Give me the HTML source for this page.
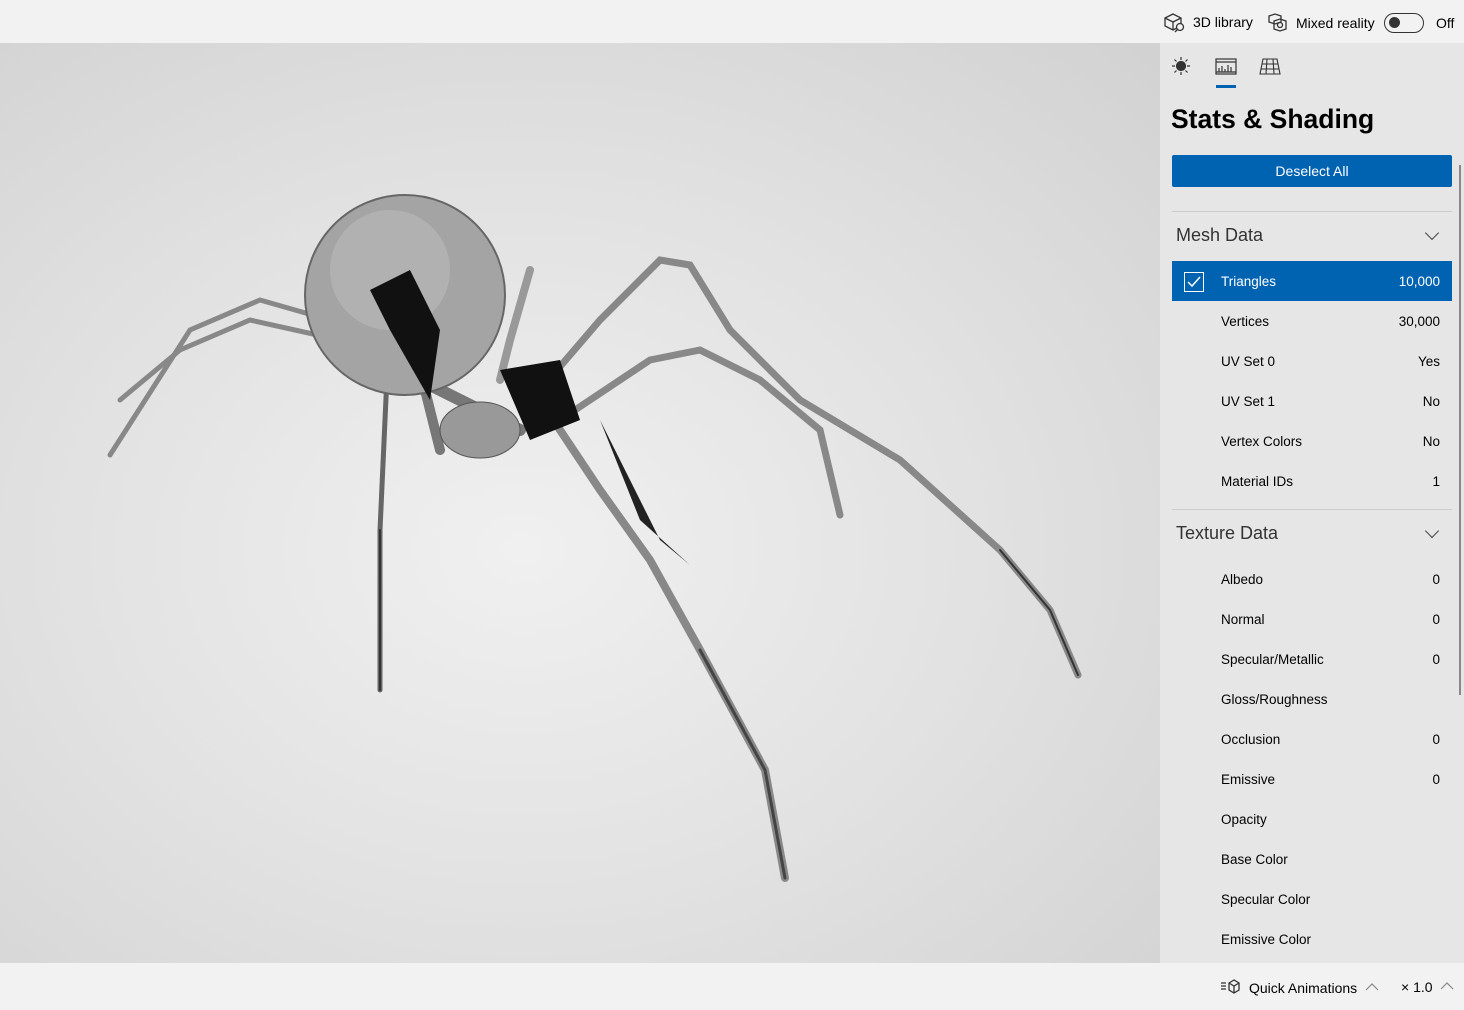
<!DOCTYPE html>
<html><head><meta charset="utf-8"><style>
*{margin:0;padding:0;box-sizing:border-box}
body{width:1464px;height:1010px;overflow:hidden;font-family:"Segoe UI","Liberation Sans",sans-serif;background:#f2f2f2;position:relative;color:#000}
#top{position:absolute;left:0;top:0;width:1464px;height:43px;background:#f2f2f2}
#view{position:absolute;left:0;top:43px;width:1160px;height:920px;background:radial-gradient(ellipse 900px 700px at 45% 55%,#f0f0f0 0%,#e2e2e2 50%,#d2d2d2 100%)}
#panel{position:absolute;left:1160px;top:43px;width:304px;height:920px;background:#e6e6e6}
#bot{position:absolute;left:0;top:963px;width:1464px;height:47px;background:#f2f2f2}
.t{position:absolute;font-size:14px;white-space:nowrap}
.row{position:absolute;left:1172px;width:280px;height:40px;font-size:13.5px}
.row .l{position:absolute;left:49px;top:13px}
.row .v{position:absolute;right:12px;top:13px}
.hd{position:absolute;left:1176px;font-size:18px;color:#333}
.sep{position:absolute;left:1172px;width:280px;height:1px;background:#ccc}
.chev{position:absolute;left:1427px;width:10px;height:10px;border-right:1.5px solid #444;border-bottom:1.5px solid #444;transform:rotate(45deg)}
</style></head><body>
<div id="top"></div>
<div id="view">
<svg width="1160" height="920" viewBox="0 43 1160 920" style="position:absolute;left:0;top:0">
<g fill="none" stroke="#333" stroke-linecap="round">
<path d="M390 310 L380 530 L380 690" stroke-width="5" stroke="#666"/>
<path d="M380 530 L380 690" stroke-width="2"/>
<path d="M410 330 L440 450" stroke-width="10" stroke="#777"/>
<path d="M540 400 L600 490 L650 560 L700 650 L765 770 L785 878" stroke-width="8" stroke="#888"/>
<path d="M700 650 L765 770 L785 878" stroke-width="3" stroke="#444"/>
<path d="M540 390 L600 320 L660 260 L690 265 L730 330 L800 400 L900 460 L1000 550 L1050 610 L1078 675" stroke-width="7" stroke="#888"/>
<path d="M1000 550 L1050 610 L1078 675" stroke-width="2"/>
<path d="M560 420 L650 360 L700 350 L760 380 L820 430 L840 515" stroke-width="7" stroke="#888"/>
<path d="M330 320 L260 300 L190 330 L110 455" stroke-width="5" stroke="#888"/>
<path d="M340 340 L250 320 L180 350 L120 400" stroke-width="5" stroke="#888"/>
<path d="M530 270 L510 340 L500 380" stroke-width="8" stroke="#999"/>
<path d="M420 380 L520 430" stroke-width="12" stroke="#777"/>
</g>
<ellipse cx="405" cy="295" rx="100" ry="100" fill="#a4a4a4" stroke="#666" stroke-width="2"/>
<ellipse cx="390" cy="270" rx="60" ry="60" fill="#bbb" opacity=".6"/>
<path d="M370 290 L410 270 L440 330 L430 400 L390 330Z" fill="#111"/>
<path d="M500 370 L560 360 L580 420 L530 440Z" fill="#111"/>
<path d="M600 420 L660 540 L690 565 L640 520Z" fill="#222"/>
<ellipse cx="480" cy="430" rx="40" ry="28" fill="#999" stroke="#555"/>
</svg>
</div>
<div id="panel"></div>
<svg style="position:absolute;left:1163px;top:12px" width="24" height="22" viewBox="0 0 24 22" fill="none" stroke="#333" stroke-width="1.3"><path d="M2 6 L10 2 L18 6 L18 14 L10 18 L2 14Z M2 6 L10 10 L18 6 M10 10 V18"/><circle cx="17" cy="15" r="3.5" fill="#f2f2f2"/><path d="M14.5 17.5 L12 20"/></svg>
<div class="t" style="left:1193px;top:14px">3D library</div>
<svg style="position:absolute;left:1267px;top:12px" width="22" height="22" viewBox="0 0 22 22" fill="none" stroke="#333" stroke-width="1.3"><path d="M2 4 L8 2 L14 4 L14 10 L8 12 L2 10Z"/><path d="M7 9 L13 7 L19 9 L19 17 L13 19 L7 17Z"/><circle cx="13" cy="13" r="2.5"/></svg>
<div class="t" style="left:1296px;top:15px">Mixed reality</div>
<div style="position:absolute;left:1384px;top:13px;width:40px;height:20px;border:1.5px solid #333;border-radius:10px"><div style="position:absolute;left:4px;top:3px;width:11px;height:11px;border-radius:50%;background:#333"></div></div>
<div class="t" style="left:1436px;top:15px">Off</div>
<svg style="position:absolute;left:1171px;top:56px" width="20" height="20" viewBox="0 0 20 20" stroke="#333" stroke-width="1.2"><circle cx="10" cy="10" r="4.5" fill="#333"/><path d="M10 1v3M10 16v3M1 10h3M16 10h3M3.5 3.5l2 2M14.5 14.5l2 2M3.5 16.5l2-2M14.5 5.5l2-2"/></svg>
<svg style="position:absolute;left:1215px;top:58px" width="22" height="17" viewBox="0 0 22 17" fill="none" stroke="#333" stroke-width="1.2"><rect x="1" y="1" width="20" height="15"/><path d="M1 4h20M4 14V10M7 14V8M10 14V11M13 14V7M16 14V9M1 14h20"/></svg>
<div style="position:absolute;left:1216px;top:85px;width:20px;height:3px;background:#0063b1"></div>
<svg style="position:absolute;left:1259px;top:58px" width="22" height="17" viewBox="0 0 22 17" fill="none" stroke="#333" stroke-width="1.1"><path d="M4 1h14l3 15H1Z M2.5 6h17M1.8 11h18.4M8 1l-1 15M14 1l1 15"/></svg>
<div class="t" style="left:1171px;top:104px;font-size:26.5px;font-weight:600">Stats &amp; Shading</div>
<div style="position:absolute;left:1172px;top:155px;width:280px;height:32px;background:#0063b1;border-radius:2px;color:#fff;font-size:14px;text-align:center;line-height:32px">Deselect All</div>
<div class="sep" style="top:211px"></div>
<div class="hd" style="top:225px">Mesh Data</div><div class="chev" style="top:228px"></div>
<div class="row" style="top:261px;background:#0063b1;color:#fff"><div style="position:absolute;left:12px;top:11px;width:20px;height:20px;border:1.5px solid #fff"></div><svg style="position:absolute;left:15px;top:14px" width="14" height="14" viewBox="0 0 14 14" fill="none" stroke="#fff" stroke-width="1.5"><path d="M1 7l4 4 8-9"/></svg><span class="l">Triangles</span><span class="v">10,000</span></div>
<div class="row" style="top:301px"><span class="l">Vertices</span><span class="v">30,000</span></div>
<div class="row" style="top:341px"><span class="l">UV Set 0</span><span class="v">Yes</span></div>
<div class="row" style="top:381px"><span class="l">UV Set 1</span><span class="v">No</span></div>
<div class="row" style="top:421px"><span class="l">Vertex Colors</span><span class="v">No</span></div>
<div class="row" style="top:461px"><span class="l">Material IDs</span><span class="v">1</span></div>
<div class="sep" style="top:509px"></div>
<div class="hd" style="top:523px">Texture Data</div><div class="chev" style="top:526px"></div>
<div class="row" style="top:559px"><span class="l">Albedo</span><span class="v">0</span></div>
<div class="row" style="top:599px"><span class="l">Normal</span><span class="v">0</span></div>
<div class="row" style="top:639px"><span class="l">Specular/Metallic</span><span class="v">0</span></div>
<div class="row" style="top:679px"><span class="l">Gloss/Roughness</span></div>
<div class="row" style="top:719px"><span class="l">Occlusion</span><span class="v">0</span></div>
<div class="row" style="top:759px"><span class="l">Emissive</span><span class="v">0</span></div>
<div class="row" style="top:799px"><span class="l">Opacity</span></div>
<div class="row" style="top:839px"><span class="l">Base Color</span></div>
<div class="row" style="top:879px"><span class="l">Specular Color</span></div>
<div class="row" style="top:919px"><span class="l">Emissive Color</span></div>
<div style="position:absolute;left:1459px;top:165px;width:2px;height:530px;background:#888"></div>
<div id="bot"></div>
<svg style="position:absolute;left:1220px;top:978px" width="22" height="18" viewBox="0 0 22 18" fill="none" stroke="#333" stroke-width="1.3"><path d="M1 5h5M1 8h5M1 11h5M9 5l5-3 5 3v7l-5 3-5-3Z M9 5l5 3 5-3M14 8v7"/></svg>
<div class="t" style="left:1249px;top:980px">Quick Animations</div>
<svg style="position:absolute;left:1365px;top:982px" width="14" height="9" fill="none" stroke="#888" stroke-width="1.2"><path d="M1 8l6-6 6 6"/></svg>
<div class="t" style="left:1401px;top:979px">× 1.0</div>
<svg style="position:absolute;left:1440px;top:981px" width="14" height="9" fill="none" stroke="#888" stroke-width="1.2"><path d="M1 8l6-6 6 6"/></svg>
</body></html>
